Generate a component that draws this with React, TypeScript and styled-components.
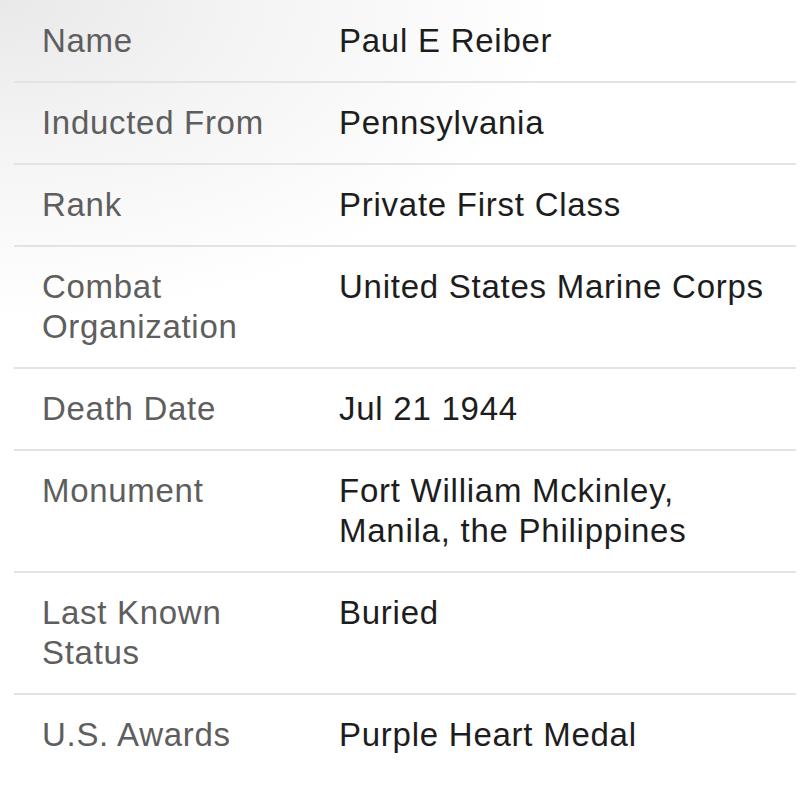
import React from "react";
import styled, { createGlobalStyle } from "styled-components";

const Global = createGlobalStyle`
  html, body {
    margin: 0;
    padding: 0;
    background: #ffffff;
  }
  body {
    font-family: "Liberation Sans", Arial, sans-serif;
  }
`;

const Page = styled.div`
  width: 803px;
  height: 800px;
  overflow: hidden;
  background:
    radial-gradient(ellipse 560px 320px at 0 0, #e9e9e9 0%, #f4f4f4 45%, rgba(255,255,255,0) 100%),
    #ffffff;
  padding: 1px 7px 0 14px;
  box-sizing: border-box;
`;

const Table = styled.div`
  display: flex;
  flex-direction: column;
`;

const Row = styled.div<{ $last?: boolean }>`
  display: grid;
  grid-template-columns: 297px 1fr;
  padding: 20px 0 20px 28px;
  border-bottom: ${(p) => (p.$last ? "none" : "2px solid #e3e3e3")};
`;

const Label = styled.div`
  font-size: 33px;
  line-height: 40px;
  color: #5e5e5e;
  letter-spacing: 0.7px;
  padding-right: 30px;
`;

const Value = styled.div`
  font-size: 33px;
  line-height: 40px;
  color: #1d1d1d;
  letter-spacing: 0.75px;
  padding-right: 20px;
`;

const rows: [string, string][] = [
  ["Name", "Paul E Reiber"],
  ["Inducted From", "Pennsylvania"],
  ["Rank", "Private First Class"],
  ["Combat Organization", "United States Marine Corps"],
  ["Death Date", "Jul 21 1944"],
  ["Monument", "Fort William Mckinley, Manila, the Philippines"],
  ["Last Known Status", "Buried"],
  ["U.S. Awards", "Purple Heart Medal"],
];

export default function App() {
  return (
    <>
      <Global />
      <Page>
        <Table>
          {rows.map(([l, v], i) => (
            <Row key={l} $last={i === rows.length - 1}>
              <Label>{l}</Label>
              <Value>{v}</Value>
            </Row>
          ))}
        </Table>
      </Page>
    </>
  );
}
